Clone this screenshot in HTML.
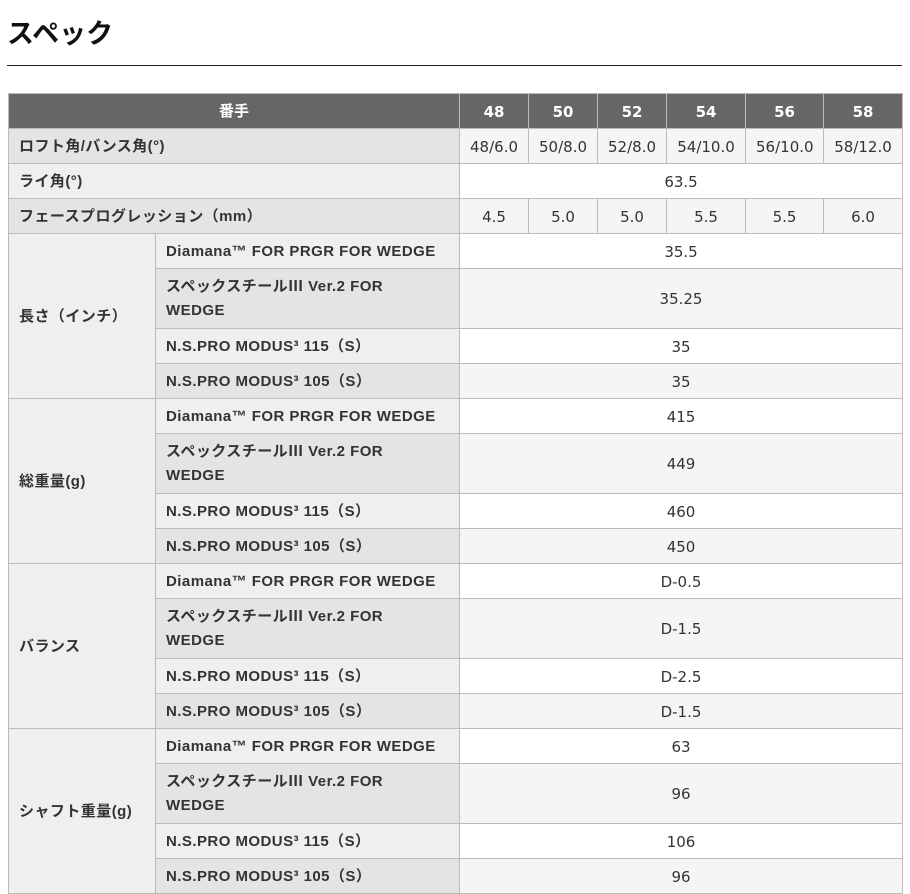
<!DOCTYPE html>
<html><head><meta charset="utf-8"><style>
body{margin:0;background:#fff;font-family:"Liberation Sans","Noto Sans CJK JP",sans-serif;color:#333;}
h1{position:absolute;left:7px;top:14px;margin:0;font-size:27px;font-weight:bold;color:#111;line-height:40px;}
.hr{position:absolute;left:7px;top:65px;width:895px;height:1px;background:#222;}
table{position:absolute;left:8px;top:93px;border-collapse:collapse;table-layout:fixed;width:894px;font-size:15px;}
td,th{border:1px solid #bbb;padding:1px 10px 0 10px;line-height:24px;}
th{background:#666;color:#fff;font-weight:bold;text-align:center;height:33px;font-family:"DejaVu Sans","Noto Sans CJK JP",sans-serif;}
th.j{font-family:"Liberation Sans","Noto Sans CJK JP",sans-serif;}
td.l{font-weight:bold;text-align:left;letter-spacing:0.45px;}
td.v{text-align:center;font-family:"DejaVu Sans","Noto Sans CJK JP",sans-serif;}
.a{background:#e4e4e4}.b{background:#efefef}.w{background:#fff}.g{background:#f5f5f5}
tr.r35 td{height:33px}tr.r59 td{height:58px}
</style></head><body>
<h1>スペック</h1><div class="hr"></div>
<table>
<colgroup><col style="width:147px"><col style="width:304px"><col style="width:69px"><col style="width:69px"><col style="width:69px"><col style="width:79px"><col style="width:78px"><col style="width:79px"></colgroup>
<tr><th class="j" colspan="2">番手</th><th>48</th><th>50</th><th>52</th><th>54</th><th>56</th><th>58</th></tr>
<tr class="r35"><td class="l a" colspan="2">ロフト角/バンス角(°)</td><td class="v g">48/6.0</td><td class="v g">50/8.0</td><td class="v g">52/8.0</td><td class="v g">54/10.0</td><td class="v g">56/10.0</td><td class="v g">58/12.0</td></tr>
<tr class="r35"><td class="l b" colspan="2">ライ角(°)</td><td class="v w" colspan="6">63.5</td></tr>
<tr class="r35"><td class="l a" colspan="2">フェースプログレッション（mm）</td><td class="v g">4.5</td><td class="v g">5.0</td><td class="v g">5.0</td><td class="v g">5.5</td><td class="v g">5.5</td><td class="v g">6.0</td></tr>

<tr class="r35"><td class="l b" rowspan="4">長さ（インチ）</td><td class="l b">Diamana™ FOR PRGR FOR WEDGE</td><td class="v w" colspan="6">35.5</td></tr>
<tr class="r59"><td class="l a">スペックスチールⅢ Ver.2 FOR<br>WEDGE</td><td class="v g" colspan="6">35.25</td></tr>
<tr class="r35"><td class="l b">N.S.PRO MODUS³ 115（S）</td><td class="v w" colspan="6">35</td></tr>
<tr class="r35"><td class="l a">N.S.PRO MODUS³ 105（S）</td><td class="v g" colspan="6">35</td></tr>

<tr class="r35"><td class="l b" rowspan="4">総重量(g)</td><td class="l b">Diamana™ FOR PRGR FOR WEDGE</td><td class="v w" colspan="6">415</td></tr>
<tr class="r59"><td class="l a">スペックスチールⅢ Ver.2 FOR<br>WEDGE</td><td class="v g" colspan="6">449</td></tr>
<tr class="r35"><td class="l b">N.S.PRO MODUS³ 115（S）</td><td class="v w" colspan="6">460</td></tr>
<tr class="r35"><td class="l a">N.S.PRO MODUS³ 105（S）</td><td class="v g" colspan="6">450</td></tr>

<tr class="r35"><td class="l b" rowspan="4">バランス</td><td class="l b">Diamana™ FOR PRGR FOR WEDGE</td><td class="v w" colspan="6">D-0.5</td></tr>
<tr class="r59"><td class="l a">スペックスチールⅢ Ver.2 FOR<br>WEDGE</td><td class="v g" colspan="6">D-1.5</td></tr>
<tr class="r35"><td class="l b">N.S.PRO MODUS³ 115（S）</td><td class="v w" colspan="6">D-2.5</td></tr>
<tr class="r35"><td class="l a">N.S.PRO MODUS³ 105（S）</td><td class="v g" colspan="6">D-1.5</td></tr>

<tr class="r35"><td class="l b" rowspan="4">シャフト重量(g)</td><td class="l b">Diamana™ FOR PRGR FOR WEDGE</td><td class="v w" colspan="6">63</td></tr>
<tr class="r59"><td class="l a">スペックスチールⅢ Ver.2 FOR<br>WEDGE</td><td class="v g" colspan="6">96</td></tr>
<tr class="r35"><td class="l b">N.S.PRO MODUS³ 115（S）</td><td class="v w" colspan="6">106</td></tr>
<tr class="r35"><td class="l a">N.S.PRO MODUS³ 105（S）</td><td class="v g" colspan="6">96</td></tr>
</table>
</body></html>
